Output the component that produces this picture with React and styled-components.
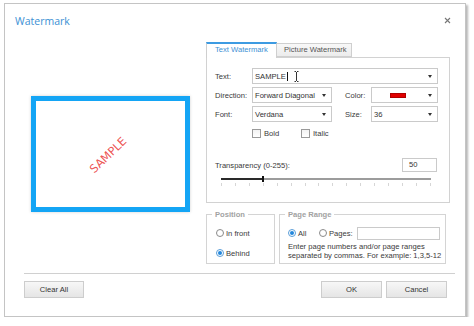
import React from 'react';
import styled, { createGlobalStyle } from 'styled-components';

const Global = createGlobalStyle`
  html, body { margin: 0; padding: 0; background: #fff; }
  body {
    font-family: "Liberation Sans", Arial, sans-serif;
    font-size: 7.6px;
    color: #3a3a3a;
  }
  * { box-sizing: border-box; }
`;

const Dialog = styled.div`
  margin: 3px 0 0 4px;
  width: 462px;
  height: 314px;
  border: 1px solid #c4c4c4;
  box-shadow: 2px 2px 2px rgba(0, 0, 0, 0.28);
  background: #fff;
  display: flex;
  flex-direction: column;
`;

const Header = styled.div`
  height: 38px;
  display: flex;
  justify-content: space-between;
  align-items: flex-start;
  padding: 10px 13px 0 10px;
`;

const Title = styled.div`
  font-family: "Open Sans", "Noto Sans", sans-serif;
  font-size: 10.5px;
  line-height: 14px;
  color: #3c90d4;
`;

const Close = styled.div`
  width: 8px;
  height: 8px;
  margin-top: 3px;
  display: flex;
`;

const Body = styled.div`
  height: 222px;
  display: flex;
`;

const PreviewColumn = styled.div`
  width: 201px;
  display: flex;
  align-items: center;
  padding-left: 26px;
  padding-top: 2px;
`;

const Page = styled.div`
  width: 159px;
  height: 116px;
  border: 5px solid #14a5f5;
  box-shadow: 0 0 3px rgba(0, 0, 0, 0.18);
  display: flex;
  align-items: center;
  justify-content: center;
`;

const PageText = styled.div`
  font-family: "DejaVu Sans", Verdana, sans-serif;
  font-size: 11.5px;
  color: rgba(232, 40, 40, 0.8);
  transform: translate(-3px, 1px) rotate(-44deg);
`;

const RightColumn = styled.div`
  width: 244px;
  display: flex;
  flex-direction: column;
`;

const TabStrip = styled.div`
  height: 15px;
  display: flex;
  align-items: flex-end;
  position: relative;
  z-index: 1;
`;

const Tab = styled.div`
  height: ${p => (p.$active ? '16px' : '14px')};
  width: ${p => p.$w}px;
  margin-bottom: ${p => (p.$active ? '-1px' : '0')};
  border: 1px solid #cfcfcf;
  border-top: ${p => (p.$active ? '2px solid #3d9be2' : '1px solid #cfcfcf')};
  border-bottom: ${p => (p.$active ? 'none' : '1px solid #cfcfcf')};
  border-left: ${p => (p.$active ? '1px solid #cfcfcf' : 'none')};
  background: ${p => (p.$active ? '#fff' : 'linear-gradient(#f8f8f8, #ececec)')};
  color: ${p => (p.$active ? '#3c90d4' : '#555')};
  padding-left: ${p => (p.$active ? '8px' : '7px')};
  line-height: 12px;
  white-space: nowrap;
`;

const Panel = styled.div`
  height: 146px;
  border: 1px solid #d2d2d2;
  padding: 10px 11px 0 8px;
  display: flex;
  flex-direction: column;
`;

const Row = styled.div`
  display: flex;
  align-items: center;
  height: 16px;
  margin-bottom: 3px;
`;

const Label = styled.div`
  width: ${p => p.$w}px;
  flex: none;
  color: #3a3a3a;
`;

const Combo = styled.div`
  width: ${p => (p.$w ? `${p.$w}px` : 'auto')};
  flex: ${p => (p.$w ? 'none' : '1')};
  height: 16px;
  border: 1px solid #cacaca;
  display: flex;
  align-items: center;
  padding: 0 5px 0 2px;
  background: #fff;
  color: #333;
`;

const ComboValue = styled.div`
  flex: 1;
  display: flex;
  align-items: center;
  justify-content: ${p => (p.$center ? 'center' : 'flex-start')};
  padding-right: ${p => (p.$center ? '6px' : '0')};
`;

const Arrow = styled.span`
  width: 0;
  height: 0;
  border-left: 2.5px solid transparent;
  border-right: 2.5px solid transparent;
  border-top: 3px solid #333;
`;

const Caret = styled.span`
  width: 1px;
  height: 9px;
  background: #111;
  margin-left: 1px;
`;

const Swatch = styled.span`
  width: 16px;
  height: 5px;
  background: #e00000;
  border: 1px solid #b00000;
`;

const Spacer = styled.div`
  width: ${p => p.$w}px;
  flex: none;
`;

const CheckRow = styled.div`
  display: flex;
  align-items: center;
  height: 10px;
  margin-top: 3px;
  padding-left: 37px;
`;

const CheckItem = styled.div`
  width: ${p => p.$w}px;
  display: flex;
  align-items: center;
  gap: 3px;
`;

const Box = styled.span`
  width: 9px;
  height: 9px;
  border: 1px solid #9a9a9a;
  background: linear-gradient(#f2f2f2, #fff);
`;

const TransRow = styled.div`
  display: flex;
  align-items: center;
  justify-content: space-between;
  height: 14px;
  margin-top: 20px;
  padding-right: 1px;
`;

const Spin = styled.div`
  width: 35px;
  height: 14px;
  border: 1px solid #cacaca;
  padding-left: 6px;
  line-height: 12px;
  color: #333;
`;

const Slider = styled.div`
  margin: 4px 7px 0 6px;
  height: 11px;
  display: flex;
  flex-direction: column;
`;

const TrackRow = styled.div`
  height: 6px;
  display: flex;
  align-items: center;
`;

const TrackFill = styled.div`
  width: 41px;
  height: 2px;
  background: #2a2a2a;
`;

const Thumb = styled.div`
  width: 2px;
  height: 6px;
  background: #111;
`;

const TrackRest = styled.div`
  flex: 1;
  height: 2px;
  background: #9c9c9c;
`;

const Ticks = styled.div`
  margin-top: 1px;
  height: 3px;
  display: flex;
  justify-content: space-between;
`;

const Tick = styled.span`
  width: 1px;
  height: 3px;
  background: #d6d6d6;
`;

const Groups = styled.div`
  display: flex;
  gap: 4px;
  margin-top: 7px;
  width: 240px;
`;

const Group = styled.fieldset`
  margin: 0;
  width: ${p => p.$w}px;
  height: 54px;
  border: 1px solid #d4d4d4;
  padding: 0;
`;

const Legend = styled.legend`
  font-weight: bold;
  color: #a2a2a2;
  padding: 0 3px;
  margin-left: 5px;
  line-height: 9px;
`;

const GroupBody = styled.div`
  display: flex;
  flex-direction: column;
  padding-left: ${p => p.$pl}px;
`;

const RadioLine = styled.div`
  display: flex;
  align-items: center;
  height: 12px;
  margin-top: ${p => p.$mt}px;
`;

const RadioItem = styled.div`
  display: flex;
  align-items: center;
  gap: 2px;
  width: ${p => (p.$w ? `${p.$w}px` : 'auto')};
`;

const Radio = styled.span`
  width: 8px;
  height: 8px;
  border-radius: 50%;
  border: 1px solid ${p => (p.$on ? '#5a9ed8' : '#8a8a8a')};
  background: #fff;
  display: flex;
  align-items: center;
  justify-content: center;
  &::after {
    content: '';
    width: 4px;
    height: 4px;
    border-radius: 50%;
    background: ${p => (p.$on ? '#2387dc' : 'transparent')};
  }
`;

const PagesInput = styled.div`
  width: 83px;
  height: 13px;
  border: 1px solid #cacaca;
  margin-left: 4px;
`;

const Hint = styled.div`
  margin-top: 3px;
  line-height: 9.4px;
  color: #3a3a3a;
  white-space: nowrap;
`;

const Separator = styled.div`
  height: 1px;
  background: #d0d0d0;
  margin: 9px 10px 0 19px;
`;

const Footer = styled.div`
  display: flex;
  padding: 7px 18px 0 19px;
  gap: 4px;
`;

const Button = styled.div`
  width: ${p => p.$w}px;
  height: 17px;
  margin-right: ${p => (p.$push ? 'auto' : '0')};
  border: 1px solid #cdcdcd;
  background: linear-gradient(#f7f7f7, #e5e5e5);
  display: flex;
  align-items: center;
  justify-content: center;
  color: #333;
`;

const IBeam = () => (
  <svg width="5" height="11" viewBox="0 0 5 11" style={{ marginLeft: 6 }}>
    <path d="M0.5 0.5h1.5M3 0.5h1.5M2.5 1v9M0.5 10.5h1.5M3 10.5h1.5" stroke="#333" strokeWidth="1" fill="none" />
  </svg>
);

export default function App() {
  return (
    <>
      <Global />
      <Dialog>
        <Header>
          <Title>Watermark</Title>
          <Close>
            <svg width="7" height="7" viewBox="0 0 7 7">
              <path d="M1 1L6 6M6 1L1 6" stroke="#777" strokeWidth="1.1" />
            </svg>
          </Close>
        </Header>
        <Body>
          <PreviewColumn>
            <Page>
              <PageText>SAMPLE</PageText>
            </Page>
          </PreviewColumn>
          <RightColumn>
            <TabStrip>
              <Tab $active $w={71}>Text Watermark</Tab>
              <Tab $w={75}>Picture Watermark</Tab>
            </TabStrip>
            <Panel>
              <Row>
                <Label $w={37}>Text:</Label>
                <Combo>
                  <ComboValue>
                    SAMPLE<Caret />
                    <IBeam />
                  </ComboValue>
                  <Arrow />
                </Combo>
              </Row>
              <Row>
                <Label $w={37}>Direction:</Label>
                <Combo $w={80}>
                  <ComboValue>Forward Diagonal</ComboValue>
                  <Arrow />
                </Combo>
                <Spacer $w={13} />
                <Label $w={26}>Color:</Label>
                <Combo $w={67}>
                  <ComboValue $center>
                    <Swatch />
                  </ComboValue>
                  <Arrow />
                </Combo>
              </Row>
              <Row>
                <Label $w={37}>Font:</Label>
                <Combo $w={80}>
                  <ComboValue>Verdana</ComboValue>
                  <Arrow />
                </Combo>
                <Spacer $w={13} />
                <Label $w={26}>Size:</Label>
                <Combo $w={67}>
                  <ComboValue>36</ComboValue>
                  <Arrow />
                </Combo>
              </Row>
              <CheckRow>
                <CheckItem $w={49}>
                  <Box />
                  Bold
                </CheckItem>
                <CheckItem $w={40}>
                  <Box />
                  Italic
                </CheckItem>
              </CheckRow>
              <TransRow>
                <span>Transparency (0-255):</span>
                <Spin>50</Spin>
              </TransRow>
              <Slider>
                <TrackRow>
                  <TrackFill />
                  <Thumb />
                  <TrackRest />
                </TrackRow>
                <Ticks>
                  {Array.from({ length: 16 }, (_, i) => (
                    <Tick key={i} />
                  ))}
                </Ticks>
              </Slider>
            </Panel>
            <Groups>
              <Group $w={69}>
                <Legend>Position</Legend>
                <GroupBody $pl={9}>
                  <RadioLine $mt={8}>
                    <RadioItem>
                      <Radio />
                      In front
                    </RadioItem>
                  </RadioLine>
                  <RadioLine $mt={8}>
                    <RadioItem>
                      <Radio $on />
                      Behind
                    </RadioItem>
                  </RadioLine>
                </GroupBody>
              </Group>
              <Group $w={167}>
                <Legend>Page Range</Legend>
                <GroupBody $pl={8}>
                  <RadioLine $mt={8}>
                    <RadioItem $w={31}>
                      <Radio $on />
                      All
                    </RadioItem>
                    <RadioItem>
                      <Radio />
                      Pages:
                    </RadioItem>
                    <PagesInput />
                  </RadioLine>
                  <Hint>
                    Enter page numbers and/or page ranges
                    <br />
                    separated by commas. For example: 1,3,5-12
                  </Hint>
                </GroupBody>
              </Group>
            </Groups>
          </RightColumn>
        </Body>
        <Separator />
        <Footer>
          <Button $w={60} $push>Clear All</Button>
          <Button $w={61}>OK</Button>
          <Button $w={61}>Cancel</Button>
        </Footer>
      </Dialog>
    </>
  );
}
